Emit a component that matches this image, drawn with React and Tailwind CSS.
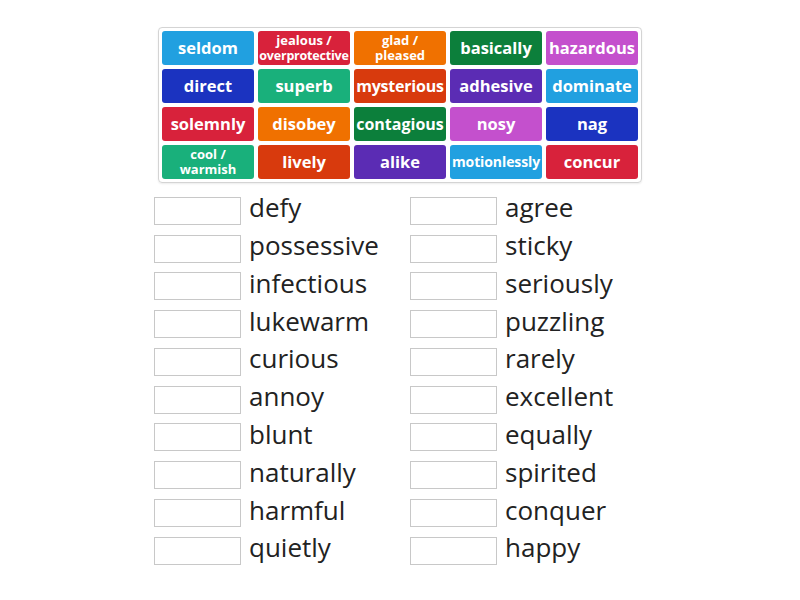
import React from 'react';

const tiles = [
  { t: 'seldom', c: 'bg-[#21a0e0]' },
  { t: 'jealous / overprotective', c: 'bg-[#d8223b]', two: true },
  { t: 'glad / pleased', c: 'bg-[#f07100]', two: true },
  { t: 'basically', c: 'bg-[#0c7f3b]' },
  { t: 'hazardous', c: 'bg-[#c450cd]' },
  { t: 'direct', c: 'bg-[#1b33c0]' },
  { t: 'superb', c: 'bg-[#19b07b]' },
  { t: 'mysterious', c: 'bg-[#d83a0d]', s: 'text-[16px] tracking-[-0.2px]' },
  { t: 'adhesive', c: 'bg-[#5b2cb4]' },
  { t: 'dominate', c: 'bg-[#21a0e0]' },
  { t: 'solemnly', c: 'bg-[#d8223b]' },
  { t: 'disobey', c: 'bg-[#f07100]' },
  { t: 'contagious', c: 'bg-[#0c7f3b]', s: 'text-[16px]' },
  { t: 'nosy', c: 'bg-[#c450cd]' },
  { t: 'nag', c: 'bg-[#1b33c0]' },
  { t: 'cool / warmish', c: 'bg-[#19b07b]', two: true },
  { t: 'lively', c: 'bg-[#d83a0d]' },
  { t: 'alike', c: 'bg-[#5b2cb4]' },
  { t: 'motionlessly', c: 'bg-[#21a0e0]', s: 'text-[14px] tracking-[-0.1px]' },
  { t: 'concur', c: 'bg-[#d8223b]' },
];

const left = ['defy', 'possessive', 'infectious', 'lukewarm', 'curious', 'annoy', 'blunt', 'naturally', 'harmful', 'quietly'];
const right = ['agree', 'sticky', 'seriously', 'puzzling', 'rarely', 'excellent', 'equally', 'spirited', 'conquer', 'happy'];

const Row = ({ word }) => (
  <div className="flex items-center h-[37.78px]">
    <div className="w-[87px] h-[28px] border border-[#c8c8c8] bg-white shrink-0" />
    <span className="ml-[8px] text-[26px] leading-none text-[#222] -mt-[7px]">{word}</span>
  </div>
);

export default function App() {
  return (
    <div className="w-[800px] h-[600px] bg-white overflow-hidden" style={{ fontFamily: '"Open Sans", sans-serif' }}>
      <div className="mx-auto mt-[27px] w-[484px] border border-[#d4d4d4] rounded-[4px] p-[3px] shadow-[0_1px_2px_rgba(0,0,0,0.08)]">
        <div className="grid grid-cols-[repeat(5,92px)] auto-rows-[34px] gap-[4px]">
          {tiles.map((x, i) => (
            <div
              key={i}
              className={`${x.c} rounded-[3px] flex items-center justify-center text-white font-bold text-center whitespace-nowrap overflow-hidden ${
                x.two ? 'text-[13px] leading-[15px] flex-col' : `${x.s || 'text-[16.5px]'} leading-none`
              }`}
            >
              {x.two ? (
                <>
                  <span>{x.t.split(' / ')[0]} /</span>
                  <span className={x.t.length > 20 ? 'text-[12.5px] tracking-[-0.2px]' : ''}>{x.t.split(' / ')[1]}</span>
                </>
              ) : (
                x.t
              )}
            </div>
          ))}
        </div>
      </div>
      <div className="mx-auto mt-[9px] w-[492px] grid grid-cols-[256px_236px]">
        <div className="flex flex-col">
          {left.map((w) => (
            <Row key={w} word={w} />
          ))}
        </div>
        <div className="flex flex-col">
          {right.map((w) => (
            <Row key={w} word={w} />
          ))}
        </div>
      </div>
    </div>
  );
}
